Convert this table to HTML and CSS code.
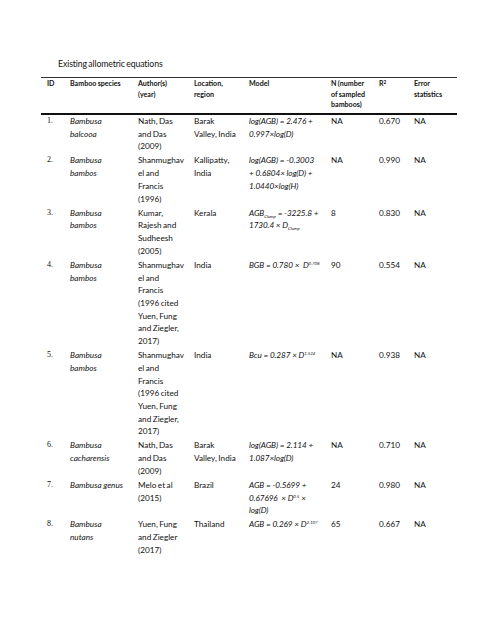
FILE: index.html
```html
<!DOCTYPE html>
<html>
<head>
<meta charset="utf-8">
<link rel="stylesheet" href="styles.css">
</head>
<body>
<div class="page">
  <p class="title">Existing allometric equations</p>
  <table class="eq">
    <colgroup>
      <col class="c-id"><col class="c-sp"><col class="c-au"><col class="c-lo"><col class="c-mo"><col class="c-n"><col class="c-r"><col class="c-er">
    </colgroup>
    <thead>
      <tr>
        <th>ID</th>
        <th>Bamboo species</th>
        <th>Author(s)<br>(year)</th>
        <th>Location,<br>region</th>
        <th>Model</th>
        <th>N (number<br>of sampled<br>bamboos)</th>
        <th>R<sup>2</sup></th>
        <th>Error<br>statistics</th>
      </tr>
    </thead>
    <tbody>
      <tr>
        <td class="id">1.</td>
        <td class="sp">Bambusa<br>balcooa</td>
        <td>Nath, Das<br>and Das<br>(2009)</td>
        <td>Barak<br>Valley, India</td>
        <td class="mo">log(AGB) = 2.476 +<br>0.997×log(D)</td>
        <td>NA</td>
        <td>0.670</td>
        <td>NA</td>
      </tr>
      <tr>
        <td class="id">2.</td>
        <td class="sp">Bambusa<br>bambos</td>
        <td>Shanmughav<br>el and<br>Francis<br>(1996)</td>
        <td>Kallipatty,<br>India</td>
        <td class="mo">log(AGB) = -0.3003<br>+ 0.6804× log(D) +<br>1.0440×log(H)</td>
        <td>NA</td>
        <td>0.990</td>
        <td>NA</td>
      </tr>
      <tr>
        <td class="id">3.</td>
        <td class="sp">Bambusa<br>bambos</td>
        <td>Kumar,<br>Rajesh and<br>Sudheesh<br>(2005)</td>
        <td>Kerala</td>
        <td class="mo">AGB<sub>Clump</sub> = -3225.8 +<br>1730.4 × D<sub>Clump</sub></td>
        <td>8</td>
        <td>0.830</td>
        <td>NA</td>
      </tr>
      <tr>
        <td class="id">4.</td>
        <td class="sp">Bambusa<br>bambos</td>
        <td>Shanmughav<br>el and<br>Francis<br>(1996 cited<br>Yuen, Fung<br>and Ziegler,<br>2017)</td>
        <td>India</td>
        <td class="mo">BGB = 0.780 × &nbsp;D<sup>0.708</sup></td>
        <td>90</td>
        <td>0.554</td>
        <td>NA</td>
      </tr>
      <tr>
        <td class="id">5.</td>
        <td class="sp">Bambusa<br>bambos</td>
        <td>Shanmughav<br>el and<br>Francis<br>(1996 cited<br>Yuen, Fung<br>and Ziegler,<br>2017)</td>
        <td>India</td>
        <td class="mo">Bcu = 0.287 × D<sup>1.524</sup></td>
        <td>NA</td>
        <td>0.938</td>
        <td>NA</td>
      </tr>
      <tr>
        <td class="id">6.</td>
        <td class="sp">Bambusa<br>cacharensis</td>
        <td>Nath, Das<br>and Das<br>(2009)</td>
        <td>Barak<br>Valley, India</td>
        <td class="mo">log(AGB) = 2.114 +<br>1.087×log(D)</td>
        <td>NA</td>
        <td>0.710</td>
        <td>NA</td>
      </tr>
      <tr>
        <td class="id">7.</td>
        <td class="sp">Bambusa genus</td>
        <td>Melo et al<br>(2015)</td>
        <td>Brazil</td>
        <td class="mo">AGB = -0.5699 +<br>0.67696 &nbsp;× D<sup>0.5</sup> ×<br>log(D)</td>
        <td>24</td>
        <td>0.980</td>
        <td>NA</td>
      </tr>
      <tr>
        <td class="id">8.</td>
        <td class="sp">Bambusa<br>nutans</td>
        <td>Yuen, Fung<br>and Ziegler<br>(2017)</td>
        <td>Thailand</td>
        <td class="mo">AGB = 0.269 × D<sup>2.107</sup></td>
        <td>65</td>
        <td>0.667</td>
        <td>NA</td>
      </tr>
    </tbody>
  </table>
</div>
</body>
</html>
```

FILE: styles.css
```css
html, body {
  margin: 0;
  padding: 0;
  background: #ffffff;
}

body {
  font-family: "Lato", "Open Sans", sans-serif;
  color: #111111;
}

.page {
  padding: 57px 0 0 41px;
  width: 416px;
}

.title {
  margin: 0 0 7px 17px;
  font-size: 8.7px;
  line-height: 13px;
  letter-spacing: -0.1px;
  word-spacing: -0.8px;
}

.eq {
  width: 416px;
  table-layout: fixed;
  border-collapse: collapse;
}

.c-id { width: 23px; }
.c-sp { width: 68px; }
.c-au { width: 56px; }
.c-lo { width: 55px; }
.c-mo { width: 82px; }
.c-n  { width: 48px; }
.c-r  { width: 35px; }
.c-er { width: 49px; }

.eq thead tr {
  border-top: 1px solid #333333;
  border-bottom: 2px solid #111111;
}

.eq th {
  text-align: left;
  vertical-align: top;
  font-weight: 700;
  font-size: 7.1px;
  line-height: 10.7px;
  padding: 1px 0 1.8px 6px;
  white-space: nowrap;
  word-spacing: -0.4px;
}

.eq td {
  vertical-align: top;
  font-size: 8.2px;
  line-height: 12.7px;
  padding: 0 0 1.4px 6px;
  white-space: nowrap;
  word-spacing: -0.6px;
}

.eq td.id {
  font-family: "Liberation Serif", "Times New Roman", serif;
  font-size: 8px;
}

.eq td.sp,
.eq td.mo {
  font-style: italic;
}

.eq td.sp {
  word-spacing: -0.2px;
}

.eq td.mo {
  letter-spacing: -0.1px;
  word-spacing: 0;
}

sup, sub {
  font-size: 4.5px;
  line-height: 0;
}

sup {
  vertical-align: 3.5px;
}

sub {
  vertical-align: -1.5px;
}

.eq th sup {
  font-size: 4.8px;
  vertical-align: 2.5px;
}
```
